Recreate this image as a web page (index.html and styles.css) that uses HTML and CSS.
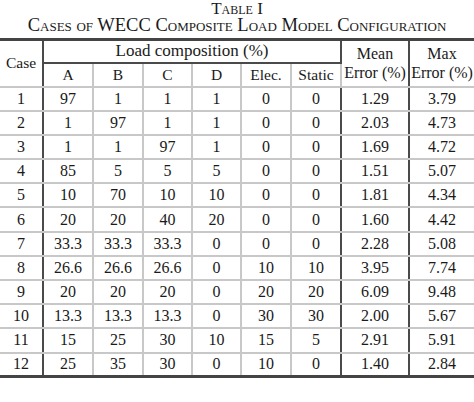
FILE: index.html
```html
<!DOCTYPE html>
<html>
<head>
<meta charset="utf-8">
<link rel="stylesheet" href="styles.css">
</head>
<body>
<div class="caption">
  <div class="cap-num">Table I</div>
  <div class="cap-title">Cases of WECC Composite Load Model Configuration</div>
</div>
<table class="tbl">
  <colgroup>
    <col class="c-case"><col class="c-a"><col class="c-b"><col class="c-c"><col class="c-d"><col class="c-e"><col class="c-s"><col class="c-mean"><col class="c-max">
  </colgroup>
  <thead>
    <tr class="h1">
      <th rowspan="2" class="dark-r">Case</th>
      <th colspan="6" class="dark-r comp">Load composition (%)</th>
      <th rowspan="2" class="dark-r err">Mean<br>Error (%)</th>
      <th rowspan="2" class="err">Max<br>Error (%)</th>
    </tr>
    <tr class="h2">
      <th>A</th><th>B</th><th>C</th><th>D</th><th>Elec.</th><th class="dark-r">Static</th>
    </tr>
  </thead>
  <tbody>
    <tr><td class="dark-r">1</td><td>97</td><td>1</td><td>1</td><td>1</td><td>0</td><td class="dark-r">0</td><td class="dark-r">1.29</td><td>3.79</td></tr>
    <tr><td class="dark-r">2</td><td>1</td><td>97</td><td>1</td><td>1</td><td>0</td><td class="dark-r">0</td><td class="dark-r">2.03</td><td>4.73</td></tr>
    <tr><td class="dark-r">3</td><td>1</td><td>1</td><td>97</td><td>1</td><td>0</td><td class="dark-r">0</td><td class="dark-r">1.69</td><td>4.72</td></tr>
    <tr><td class="dark-r">4</td><td>85</td><td>5</td><td>5</td><td>5</td><td>0</td><td class="dark-r">0</td><td class="dark-r">1.51</td><td>5.07</td></tr>
    <tr><td class="dark-r">5</td><td>10</td><td>70</td><td>10</td><td>10</td><td>0</td><td class="dark-r">0</td><td class="dark-r">1.81</td><td>4.34</td></tr>
    <tr><td class="dark-r">6</td><td>20</td><td>20</td><td>40</td><td>20</td><td>0</td><td class="dark-r">0</td><td class="dark-r">1.60</td><td>4.42</td></tr>
    <tr><td class="dark-r">7</td><td>33.3</td><td>33.3</td><td>33.3</td><td>0</td><td>0</td><td class="dark-r">0</td><td class="dark-r">2.28</td><td>5.08</td></tr>
    <tr><td class="dark-r">8</td><td>26.6</td><td>26.6</td><td>26.6</td><td>0</td><td>10</td><td class="dark-r">10</td><td class="dark-r">3.95</td><td>7.74</td></tr>
    <tr><td class="dark-r">9</td><td>20</td><td>20</td><td>20</td><td>0</td><td>20</td><td class="dark-r">20</td><td class="dark-r">6.09</td><td>9.48</td></tr>
    <tr><td class="dark-r">10</td><td>13.3</td><td>13.3</td><td>13.3</td><td>0</td><td>30</td><td class="dark-r">30</td><td class="dark-r">2.00</td><td>5.67</td></tr>
    <tr><td class="dark-r">11</td><td>15</td><td>25</td><td>30</td><td>10</td><td>15</td><td class="dark-r">5</td><td class="dark-r">2.91</td><td>5.91</td></tr>
    <tr><td class="dark-r">12</td><td>25</td><td>35</td><td>30</td><td>0</td><td>10</td><td class="dark-r">0</td><td class="dark-r">1.40</td><td>2.84</td></tr>
  </tbody>
</table>
</body>
</html>
```
FILE: styles.css
```css
html, body {
  margin: 0;
  padding: 0;
  background: #ffffff;
}
body {
  width: 474px;
  font-family: "Liberation Serif", "Times New Roman", serif;
  color: #1a1a1a;
}
.caption {
  text-align: center;
  font-variant: small-caps;
  height: 38px;
}
.cap-num {
  font-size: 17px;
  line-height: 18px;
  height: 18px;
}
.cap-title {
  font-size: 18.5px;
  line-height: 15px;
  height: 15px;
}
.tbl {
  border-collapse: collapse;
  width: 474px;
  table-layout: fixed;
  font-size: 16px;
  border-top: 3px solid #444444;
  border-bottom: 3px solid #444444;
}
.c-case { width: 43px; }
.c-a { width: 50px; }
.c-b { width: 50px; }
.c-c { width: 49px; }
.c-d { width: 49px; }
.c-e { width: 50px; }
.c-s { width: 50px; }
.c-mean { width: 68px; }
.c-max { width: 65px; }
.tbl th, .tbl td {
  padding: 0;
  text-align: center;
  font-weight: normal;
  border: 2px solid #c8c8c8;
  border-top: none;
  vertical-align: middle;
}
.tbl th {
  font-size: 15.5px;
}
.tbl th:first-child, .tbl td:first-child {
  border-left: none;
}
.tbl th:last-child, .tbl td:last-child {
  border-right: none;
}
.tbl .dark-r {
  border-right: 2px solid #4a4a4a;
}
.tbl .comp {
  font-size: 17px;
  border-bottom: 2px solid #4a4a4a;
}
.tbl th.err {
  font-size: 16px;
  line-height: 19px;
}
.h1 { height: 23px; }
.h2 { height: 24px; }
.tbl tbody tr { height: 24.2px; }
.tbl tbody tr:last-child td { border-bottom: none; }
```
